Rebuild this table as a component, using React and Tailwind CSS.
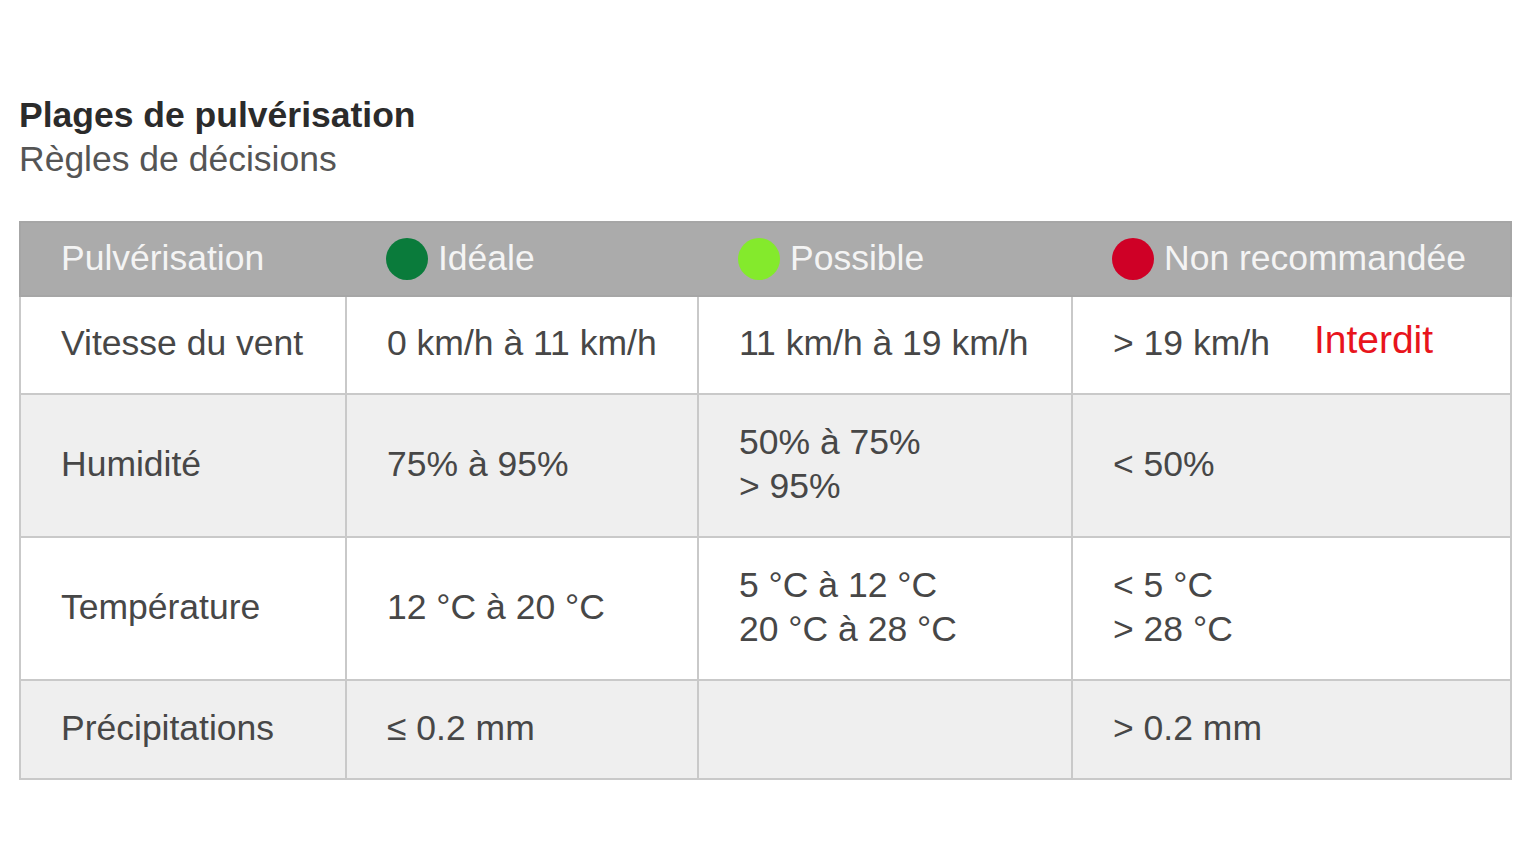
const font = { fontFamily: '"Liberation Sans", Arial, sans-serif' }

const levels = [
  { label: 'Idéale', dot: 'bg-[#0a7b3b]' },
  { label: 'Possible', dot: 'bg-[#84ea2c]' },
  { label: 'Non recommandée', dot: 'bg-[#cf0026]' },
]

const rows = [
  { name: 'Vitesse du vent', h: 'h-[98px]', bg: 'bg-white', cells: [['0 km/h à 11 km/h'], ['11 km/h à 19 km/h'], ['> 19 km/h']], banned: true },
  { name: 'Humidité', h: 'h-[143px]', bg: 'bg-[#efefef]', cells: [['75% à 95%'], ['50% à 75%', '> 95%'], ['< 50%']] },
  { name: 'Température', h: 'h-[143px]', bg: 'bg-white', cells: [['12 °C à 20 °C'], ['5 °C à 12 °C', '20 °C à 28 °C'], ['< 5 °C', '> 28 °C']] },
  { name: 'Précipitations', h: 'h-[99px]', bg: 'bg-[#efefef]', cells: [['≤ 0.2 mm'], [], ['> 0.2 mm']] },
]

function Cell({ lines, banned }) {
  return (
    <td className="border-2 border-[#c9c9c9] pb-[4px] pl-[40px] align-middle">
      <div className="flex items-center">
        <div className="leading-[44px]">
          {lines.map((line) => (
            <div key={line}>{line}</div>
          ))}
        </div>
        {banned && <span className="mb-[6px] ml-[44px] text-[39px] leading-[44px] text-[#e8141c]">Interdit</span>}
      </div>
    </td>
  )
}

export default function App() {
  return (
    <div className="min-h-screen bg-white pl-[19px] pt-[93px] text-[35.5px]" style={font}>
      <h1 className="font-bold leading-[44px] text-[#2b2b2b]">Plages de pulvérisation</h1>
      <p className="leading-[44px] text-[#555555]">Règles de décisions</p>

      <table className="mt-[40px] w-[1491px] table-fixed border-collapse text-[#474747]">
        <colgroup>
          <col className="w-[326px]" />
          <col className="w-[352px]" />
          <col className="w-[374px]" />
          <col className="w-[439px]" />
        </colgroup>
        <thead>
          <tr className="h-[74px] bg-[#ababab] text-[#f4f4f4]">
            <th className="border-2 border-r-0 border-[#a6a6a6] pl-[40px] text-left font-normal">Pulvérisation</th>
            {levels.map((level, i) => (
              <th
                key={level.label}
                className={`border-y-2 border-[#a6a6a6] pl-[40px] text-left font-normal ${i === 2 ? 'border-r-2' : ''}`}
              >
                <div className="flex items-center gap-[10px]">
                  <span className={`h-[42px] w-[42px] shrink-0 rounded-full ${level.dot}`} />
                  <span>{level.label}</span>
                </div>
              </th>
            ))}
          </tr>
        </thead>
        <tbody>
          {rows.map((row) => (
            <tr key={row.name} className={`${row.h} ${row.bg}`}>
              <Cell lines={[row.name]} />
              {row.cells.map((lines, i) => (
                <Cell key={i} lines={lines} banned={row.banned && i === 2} />
              ))}
            </tr>
          ))}
        </tbody>
      </table>
    </div>
  )
}
